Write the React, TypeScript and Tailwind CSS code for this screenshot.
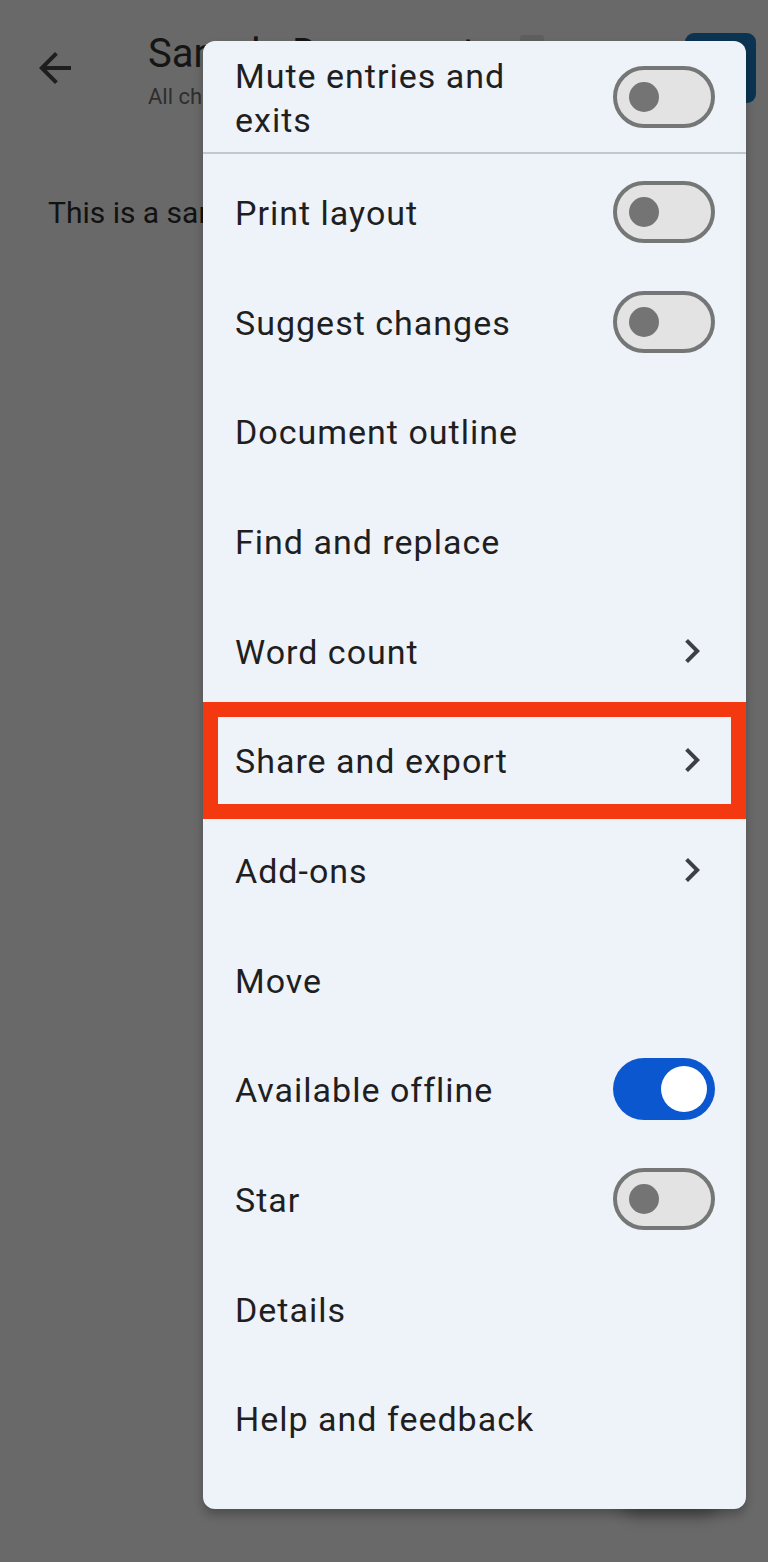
import React from "react";

type Row = {
  label: string;
  kind?: "off" | "on" | "chevron";
  highlight?: boolean;
};

const rows: Row[] = [
  { label: "Print layout", kind: "off" },
  { label: "Suggest changes", kind: "off" },
  { label: "Document outline" },
  { label: "Find and replace" },
  { label: "Word count", kind: "chevron" },
  { label: "Share and export", kind: "chevron", highlight: true },
  { label: "Add-ons", kind: "chevron" },
  { label: "Move" },
  { label: "Available offline", kind: "on" },
  { label: "Star", kind: "off" },
  { label: "Details" },
  { label: "Help and feedback" },
];

const SwitchOff = () => (
  <div className="w-[102px] h-[62px] shrink-0 rounded-full border-[4px] border-[#747775] bg-[#e3e3e3] flex items-center pl-[12px]">
    <div className="w-[30px] h-[30px] rounded-full bg-[#747474]" />
  </div>
);

const SwitchOn = () => (
  <div className="w-[102px] h-[62px] shrink-0 rounded-full bg-[#0b57d0] flex items-center justify-end pr-[8px]">
    <div className="w-[46px] h-[46px] rounded-full bg-white" />
  </div>
);

const Chevron = () => (
  <svg width="48" height="48" viewBox="0 0 24 24" className="shrink-0 mr-[-1px]">
    <path d="M10 6L8.59 7.41 13.17 12l-4.58 4.59L10 18l6-6z" fill="#3c3f44" />
  </svg>
);

export default function App() {
  return (
    <div
      className="relative w-[768px] h-[1562px] overflow-hidden bg-[#696969]"
      style={{ fontFamily: "Roboto, 'Noto Sans', sans-serif" }}
    >
      {/* page behind the scrim */}
      <div className="flex items-start pl-[31px] pt-[23px] pr-[12px]">
        <svg width="48" height="48" viewBox="0 0 24 24" className="mt-[21px]">
          <path
            d="M20 11H7.83l5.59-5.59L12 4l-8 8 8 8 1.41-1.41L7.83 13H20v-2z"
            fill="#1e1e1e"
          />
        </svg>
        <div className="ml-[69px] flex flex-col pt-[3px]">
          <span className="text-[40px] leading-[56px] text-[#151515]">Sample Document</span>
          <span className="text-[22px] leading-[26px] text-[#2e2e2e] mt-[2px]">All changes saved</span>
        </div>
        <div className="ml-auto mt-[10px] w-[71px] h-[70px] rounded-[9px] bg-[#0b3452]" />
      </div>
      <div className="absolute left-[520px] top-[35px] w-[24px] h-[10px] rounded-[3px] bg-[#5e5e5e]" />
      <p className="pl-[48px] pt-[83px] text-[30px] leading-[40px] text-[#121212]">
        This is a sample document.
      </p>

      {/* shadow of the button under the menu */}
      <div className="absolute left-[620px] top-[1440px] w-[100px] h-[64px] rounded-[18px] shadow-[0_12px_16px_rgba(0,0,0,0.3)] bg-[#696969]" />

      {/* overflow menu */}
      <div className="absolute left-[203px] top-[41px] w-[543px] rounded-[12px] bg-[#eef2f9] shadow-[0_6px_10px_rgba(0,0,0,0.25)] pb-[36px] text-[#1f1f1f]">
        <div className="h-[113px] flex items-center justify-between pl-[32px] pr-[31px] border-b-[2px] border-[#c4c7cc]">
          <span className="text-[34px] leading-[44px] tracking-[1px] pt-[2px]">
            Mute entries and
            <br />
            exits
          </span>
          <SwitchOff />
        </div>
        <div className="mt-[3px]">
          {rows.map((r) => (
            <div
              key={r.label}
              className="relative h-[109.7px] flex items-center justify-between pl-[32px] pr-[31px]"
            >
              <span className="text-[34px] leading-[44px] tracking-[1px] pt-[2px]">{r.label}</span>
              {r.kind === "off" && <SwitchOff />}
              {r.kind === "on" && <SwitchOn />}
              {r.kind === "chevron" && <Chevron />}
              {r.highlight && (
                <div className="absolute left-0 right-0 -top-[3px] -bottom-[4px] border-[15px] border-[#f4380f]" />
              )}
            </div>
          ))}
        </div>
      </div>
    </div>
  );
}
